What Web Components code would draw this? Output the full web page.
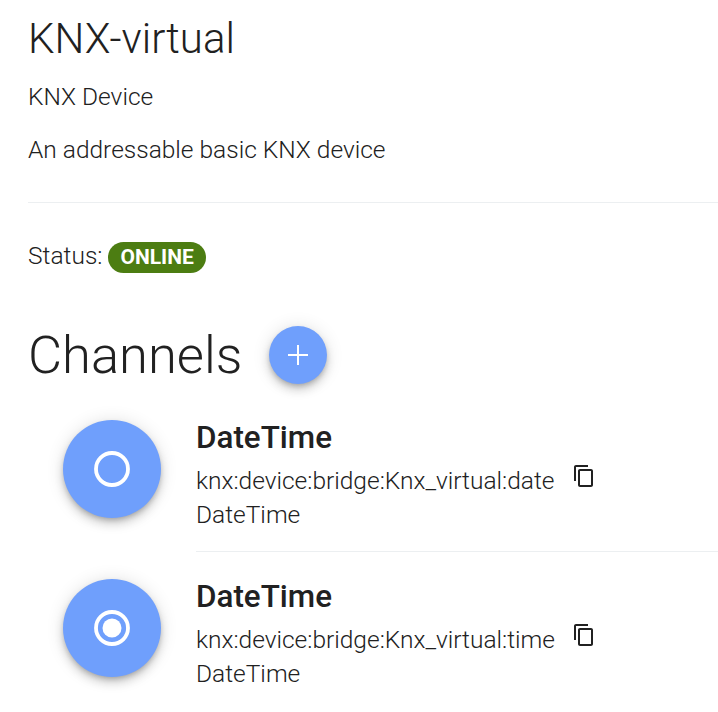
<!DOCTYPE html>
<html>
<head>
<meta charset="utf-8">
<title>KNX-virtual</title>
<style>
  html, body { margin: 0; padding: 0; background: #fff; }
  body { font-family: Roboto, "Liberation Sans", sans-serif; font-weight: 300; color: #212121; overflow: hidden; height: 712px; }
</style>
</head>
<body>
<thing-page></thing-page>

<template id="round-icon">
  <style>
    :host { display: flex; align-items: center; justify-content: center; flex-shrink: 0; border-radius: 50%; background: #6f9ffc; width: 98px; height: 98px; box-shadow: 0 3px 5px -1px rgba(0,0,0,.2), 0 6px 10px 0 rgba(0,0,0,.14), 0 1px 18px 0 rgba(0,0,0,.12); }
    :host([small]) { width: 58px; height: 58px; }
    svg { display: block; }
  </style>
  <slot></slot>
</template>

<template id="status-badge">
  <style>
    :host { display: inline-block; background: #4c7d12; color: #fff; font-weight: 700; font-size: 21px; line-height: 31px; height: 31px; padding: 0 12px; border-radius: 16px; }
  </style>
  <slot></slot>
</template>

<template id="channel-row">
  <style>
    :host { display: flex; align-items: flex-start; margin-bottom: 27px; }
    .icon { width: 168px; flex-shrink: 0; padding-left: 35px; box-sizing: border-box; }
    .body { flex: 1; min-width: 0; height: 132px; box-sizing: border-box; }
    :host([divider]) .body { border-bottom: 1px solid #eceff1; }
    h3 { margin: 0; font-size: 31.400px; font-weight: 500; line-height: 36px; color: #212121; }
    .uid { display: flex; align-items: center; font-size: 24.500px; line-height: 35px; margin-top: 7px; }
    .uid svg { display: block; margin-left: 17px; margin-top: -10px; }
    .label { font-size: 24.500px; line-height: 35px; margin-top: -1px; }
  </style>
  <div class="icon"><slot name="icon"></slot></div>
  <div class="body">
    <h3><slot name="title"></slot></h3>
    <div class="uid"><slot name="uid"></slot>
      <svg width="24" height="24" viewBox="0 0 24 24" fill="#212121"><path d="M16 1H4c-1.100 0-2 .9-2 2v14h2V3h12V1zm3 4H8c-1.100 0-2 .9-2 2v14c0 1.100.9 2 2 2h11c1.100 0 2-.9 2-2V7c0-1.100-.9-2-2-2zm0 16H8V7h11v14z"/></svg>
    </div>
    <div class="label"><slot name="label"></slot></div>
  </div>
</template>

<template id="thing-page">
  <style>
    :host { display: block; padding: 0 0 0 28px; }
    h1 { margin: 0; padding-top: 14px; font-size: 42px; font-weight: 300; line-height: 50px; }
    p { margin: 0; font-size: 24.500px; line-height: 35px; }
    .type { margin-top: 15px; }
    .desc { margin-top: 18px; }
    hr { border: 0; border-top: 1px solid #eceff1; margin: 35px 0 0; }
    .status { display: flex; align-items: center; gap: 6px; margin-top: 39px; font-size: 24.500px; height: 31px; }
    .status span { position: relative; top: -2px; }
    .head { display: flex; align-items: center; gap: 27px; margin-top: 49px; }
    h2 { margin: 0; font-size: 52.500px; font-weight: 300; line-height: 66px; }
    .rows { margin-top: 32px; }
  </style>
  <h1>KNX-virtual</h1>
  <p class="type">KNX Device</p>
  <p class="desc">An addressable basic KNX device</p>
  <hr>
  <div class="status"><span>Status:</span> <status-badge>ONLINE</status-badge></div>
  <div class="head">
    <h2>Channels</h2>
    <round-icon small>
      <svg width="24" height="24" viewBox="0 0 24 24" fill="none" stroke="#fff" stroke-width="2"><path d="M12 2v20M2 12h20"/></svg>
    </round-icon>
  </div>
  <div class="rows">
    <channel-row divider>
      <round-icon slot="icon">
        <svg width="36" height="36" viewBox="0 0 36 36" fill="none" stroke="#fff" stroke-width="3.800"><circle cx="18" cy="18" r="16"/></svg>
      </round-icon>
      <span slot="title">DateTime</span>
      <span slot="uid">knx:device:bridge:Knx_virtual:date</span>
      <span slot="label">DateTime</span>
    </channel-row>
    <channel-row>
      <round-icon slot="icon">
        <svg width="36" height="36" viewBox="0 0 36 36"><circle cx="18" cy="18" r="16" fill="none" stroke="#fff" stroke-width="3.800"/><circle cx="18" cy="18" r="9.500" fill="#fff"/></svg>
      </round-icon>
      <span slot="title">DateTime</span>
      <span slot="uid">knx:device:bridge:Knx_virtual:time</span>
      <span slot="label">DateTime</span>
    </channel-row>
  </div>
</template>

<script>
  class TemplatedElement extends HTMLElement {
    constructor() {
      super();
      const tpl = document.getElementById(this.constructor.templateId);
      this.attachShadow({ mode: "open" }).appendChild(tpl.content.cloneNode(true));
    }
  }
  class RoundIcon extends TemplatedElement { static get templateId() { return "round-icon"; } }
  class StatusBadge extends TemplatedElement { static get templateId() { return "status-badge"; } }
  class ChannelRow extends TemplatedElement { static get templateId() { return "channel-row"; } }
  class ThingPage extends TemplatedElement { static get templateId() { return "thing-page"; } }
  customElements.define("round-icon", RoundIcon);
  customElements.define("status-badge", StatusBadge);
  customElements.define("channel-row", ChannelRow);
  customElements.define("thing-page", ThingPage);
</script>
</body>
</html>
